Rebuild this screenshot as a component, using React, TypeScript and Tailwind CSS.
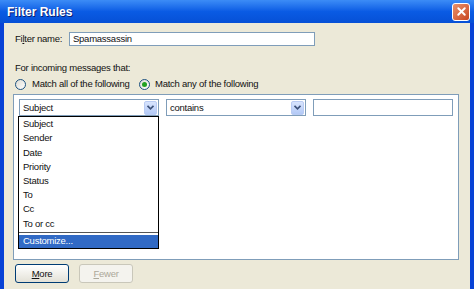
import { X } from 'lucide-react';

const FIELDS = ['Subject', 'Sender', 'Date', 'Priority', 'Status', 'To', 'Cc', 'To or cc'];

function Chevron() {
  return (
    <span className="flex w-[13px] h-[14px] items-center justify-center rounded-[2px] border border-[#B9CBF3] bg-gradient-to-b from-[#D8E4FD] to-[#B3C9F6]">
      <svg width="7" height="5" viewBox="0 0 7 5">
        <path d="M0.5 0.8 L3.5 3.8 L6.5 0.8" fill="none" stroke="#3D5178" strokeWidth="1.7" />
      </svg>
    </span>
  );
}

function Select({ value, width }: { value: string; width: string }) {
  return (
    <div className={`${width} h-[17px] flex items-center justify-between border border-[#7F9DB9] bg-white pl-[3px] pr-[1px]`}>
      <span>{value}</span>
      <Chevron />
    </div>
  );
}

function Radio({ checked }: { checked?: boolean }) {
  return (
    <span className="flex w-[11px] h-[11px] items-center justify-center rounded-full border border-[#1C5180] bg-gradient-to-br from-[#DCDBD3] to-white">
      {checked && <span className="w-[5px] h-[5px] rounded-full bg-[#21A121]" />}
    </span>
  );
}

export default function App() {
  return (
    <div className="w-[474px] h-[289px] flex flex-col overflow-hidden text-[9.5px] tracking-[-0.25px] text-[#111] font-['Tahoma','Liberation_Sans',sans-serif]">
      {/* Title bar */}
      <div className="h-[23px] shrink-0 flex items-center justify-between pl-[7px] pr-[4px] bg-gradient-to-b from-[#3C8CF6] via-[#0A5BE4] to-[#0650D6]">
        <span className="text-white font-bold text-[12px] tracking-normal font-['Liberation_Sans',sans-serif] [text-shadow:1px_1px_0_#0A1E72]">
          Filter Rules
        </span>
        <span className="flex w-[18px] h-[18px] items-center justify-center rounded-[3px] border border-white bg-gradient-to-br from-[#E8916A] to-[#C8441C]">
          <X className="w-[13px] h-[13px] text-white" strokeWidth={3.5} />
        </span>
      </div>

      {/* Body */}
      <div className="flex-1 flex flex-col border-x-4 border-[#0842D6] bg-[#ECE9D8] pl-[11px] pr-[7px]">
        <div className="flex items-center mt-[9px]">
          <span className="w-[54px]">
            Fi<span className="underline">l</span>ter name:
          </span>
          <div className="w-[246px] h-[14px] flex items-center border border-[#7F9DB9] bg-white pl-[3px]">
            Spamassassin
          </div>
        </div>

        <div className="mt-[16px] leading-[12px]">For incoming messages that:</div>

        <div className="flex items-center mt-[4px] h-[12px]">
          <Radio />
          <span className="ml-[6px] w-[107px]">Match all of the following</span>
          <Radio checked />
          <span className="ml-[5px]">Match any of the following</span>
        </div>

        <div className="mt-[4px] -ml-[2px] w-[446px] h-[166px] border border-[#7F9DB9] bg-white px-[5px] pt-[4px]">
          <div className="flex gap-[7px]">
            <div className="relative">
              <Select value="Subject" width="w-[140px]" />
              <div className="absolute left-[-1px] top-[17px] z-10 w-[141px] border border-black bg-white flex flex-col">
                {FIELDS.map(f => (
                  <div key={f} className="h-[14.2px] flex items-center pl-[4px]">{f}</div>
                ))}
                <div className="border-t border-[#555] mt-[1px]" />
                <div className="h-[13px] mt-[2px] flex items-center pl-[4px] bg-[#316AC5] text-white">
                  Customize...
                </div>
              </div>
            </div>
            <Select value="contains" width="w-[141px]" />
            <div className="w-[141px] h-[17px] border border-[#7F9DB9] bg-white" />
          </div>
        </div>

        <div className="flex gap-[10px] mt-[4px]">
          <button className="w-[54px] h-[19px] rounded-[3px] border border-[#003C74] bg-gradient-to-b from-white to-[#E3E1D6]">
            <span className="underline">M</span>ore
          </button>
          <button className="w-[54px] h-[19px] rounded-[3px] border border-[#C9C7BA] bg-[#F4F3EE] text-[#ACA899]">
            <span className="underline">F</span>ewer
          </button>
        </div>
      </div>
    </div>
  );
}
